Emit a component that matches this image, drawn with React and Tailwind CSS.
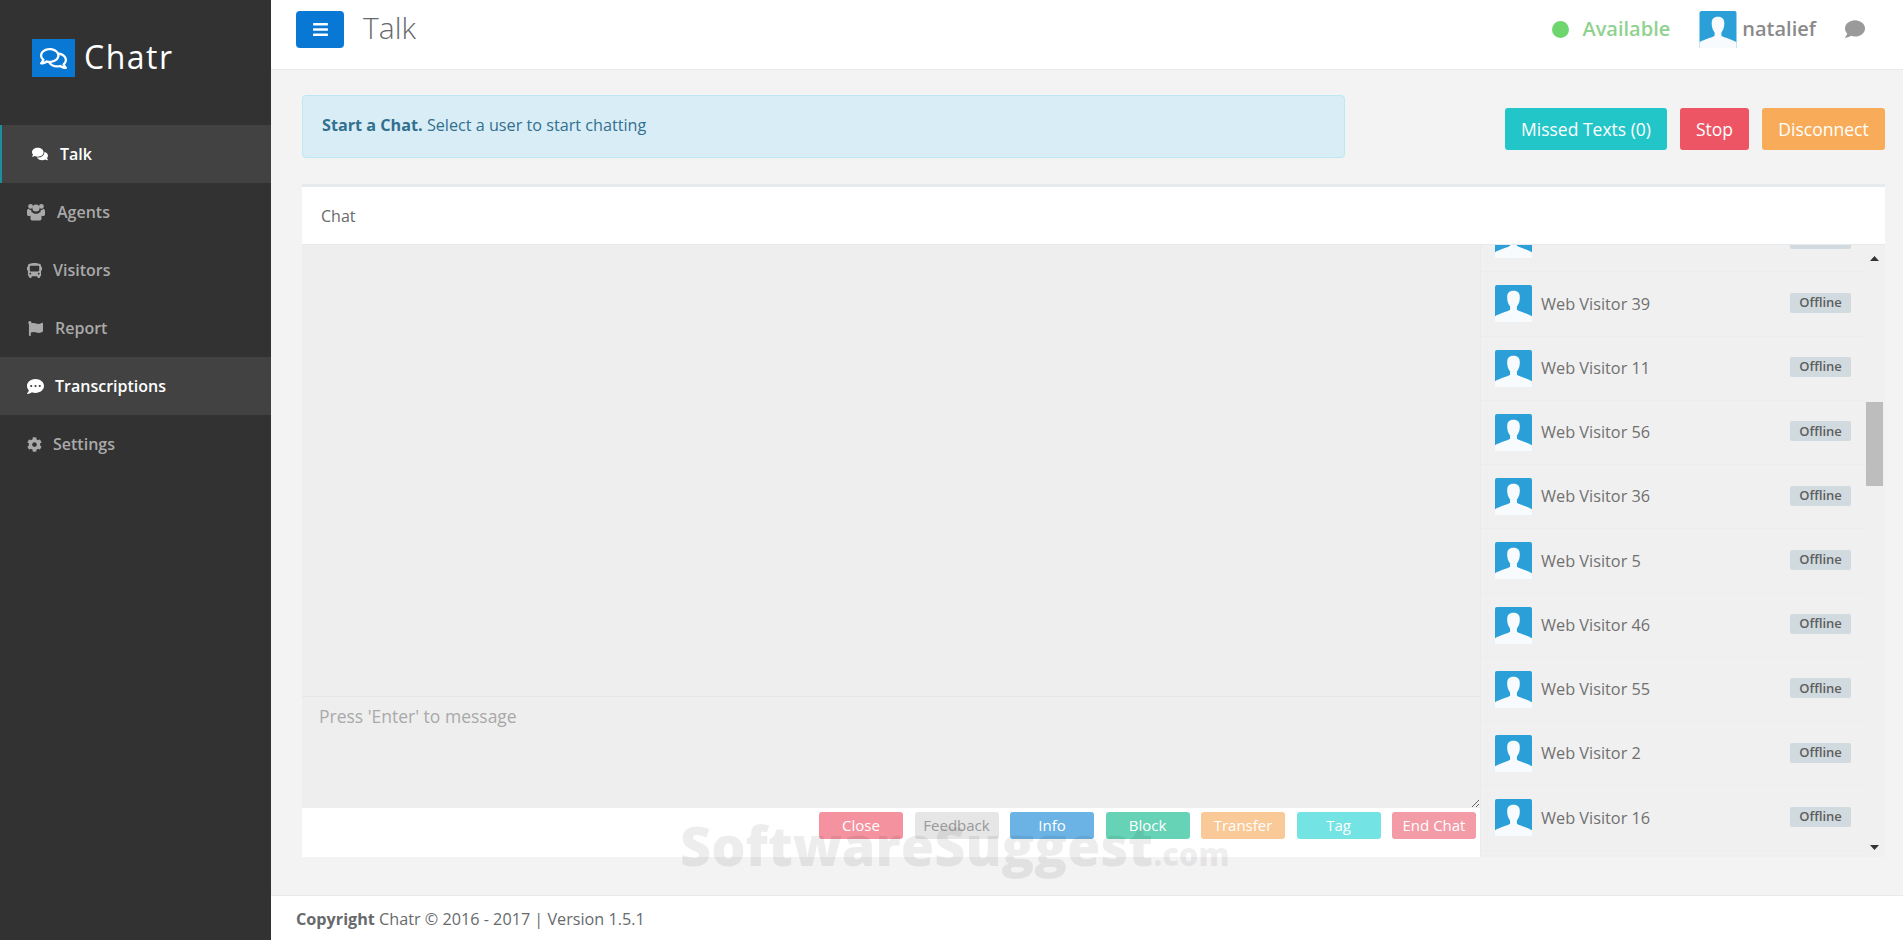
import React from "react";
import { FaBars, FaBus, FaCog, FaComment, FaCommentDots, FaComments, FaFlag, FaRegComments } from "react-icons/fa";

function UsersIcon({ size }) {
  return (
    <svg width={size} height={size} viewBox="0 0 18 18" fill="currentColor" aria-hidden="true">
      <circle cx="3.600" cy="3.400" r="2.400" />
      <circle cx="14.400" cy="3.400" r="2.400" />
      <circle cx="9" cy="5" r="3.600" />
      <path d="M0 8c0-1.200.8-2.200 1.600-2.200.6.8 1.500 1.200 2.500 1.200.2 1.500.7 2.800 1.600 3.600-1.200.5-1.900 1.400-2.100 2.400H1.500C.6 13 0 12.400 0 11.600zM18 8c0-1.200-.8-2.200-1.600-2.200-.6.8-1.500 1.200-2.500 1.200-.2 1.500-.7 2.800-1.600 3.600 1.200.5 1.900 1.400 2.100 2.400h2.100c.9 0 1.500-.6 1.500-1.400z" />
      <path d="M5.300 9.200c.9 1 2.200 1.500 3.700 1.500s2.800-.5 3.700-1.500c1.100.3 1.800 1.500 1.800 3.600v3c0 1-.8 1.700-1.600 1.700H5.100c-.8 0-1.600-.7-1.600-1.700v-3c0-2.100.7-3.300 1.800-3.600z" />
    </svg>
  );
}

const navItems = [
  { label: "Talk", icon: FaComments, iconSize: 16, padLeft: "pl-[30px]", gap: "gap-[12px]", active: true, accent: true },
  { label: "Agents", icon: UsersIcon, iconSize: 18, padLeft: "pl-[27px]", gap: "gap-[12px]" },
  { label: "Visitors", icon: FaBus, iconSize: 15, padLeft: "pl-[27px]", gap: "gap-[11px]" },
  { label: "Report", icon: FaFlag, iconSize: 15, padLeft: "pl-[28px]", gap: "gap-[12px]" },
  { label: "Transcriptions", icon: FaCommentDots, iconSize: 17, padLeft: "pl-[27px]", gap: "gap-[11px]", active: true },
  { label: "Settings", icon: FaCog, iconSize: 15, padLeft: "pl-[27px]", gap: "gap-[11px]" },
];

const visitors = ["Web Visitor 39", "Web Visitor 11", "Web Visitor 56", "Web Visitor 36", "Web Visitor 5", "Web Visitor 46", "Web Visitor 55", "Web Visitor 2", "Web Visitor 16"];

const chatActions = [
  { label: "Close", className: "bg-[#f4939f] text-white" },
  { label: "Feedback", className: "bg-[#e6e6e6] text-[#999999]" },
  { label: "Info", className: "bg-[#6bb2e5] text-white" },
  { label: "Block", className: "bg-[#66d3b6] text-white" },
  { label: "Transfer", className: "bg-[#f9c997] text-white" },
  { label: "Tag", className: "bg-[#74e3e3] text-white" },
  { label: "End Chat", className: "bg-[#f39ba6] text-white" },
];

function Avatar({ className }) {
  return (
    <svg className={className} viewBox="0 0 38 38" aria-hidden="true">
      <path d="M2 0h34a2 2 0 0 1 2 2v36H0V2a2 2 0 0 1 2-2z" fill="#2a9fd8" />
      <path
        d="M19 6c-4.500 0-6.500 2.500-6.500 6.500 0 4 1 7 3 9.500v3.500c-3 2-10 3.500-15.500 6.500v6h38v-6c-5.500-3-12.500-4.500-15.500-6.500V22c2-2.500 3-5.500 3-9.500C25.500 8.500 23.500 6 19 6z"
        fill="#f7fbfd"
      />
    </svg>
  );
}

function Sidebar() {
  return (
    <aside className="w-[271px] shrink-0 bg-[#323232] flex flex-col">
      <div className="h-[125px] pl-[32px] pt-[39px]">
        <div className="flex items-center">
          <div className="w-[43px] h-[38px] bg-[#0878d4] flex items-center justify-center text-white">
            <FaRegComments size={27} />
          </div>
          <span className="ml-[9px] mt-[-2px] text-[32px] leading-[38px] tracking-[1.500px] text-white font-['Open_Sans',sans-serif]">Chatr</span>
        </div>
      </div>
      <nav>
        {navItems.map((item) => {
          const Icon = item.icon;
          return (
            <div
              key={item.label}
              className={`h-[58px] flex items-center ${item.padLeft} ${item.gap} ${item.active ? "bg-[#424242] text-white font-semibold" : "text-[#a9a9a9] font-semibold"} ${item.accent ? "border-l-2 border-[#1b8f9c]" : ""}`}
            >
              <Icon size={item.iconSize} />
              <span className="text-[16px]">{item.label}</span>
            </div>
          );
        })}
      </nav>
    </aside>
  );
}

function TopBar() {
  return (
    <header className="h-[70px] shrink-0 bg-white border-b border-[#e7eaec] flex items-start pl-[25px] pr-[38px]">
      <button className="mt-[11px] w-[48px] h-[37px] rounded-[4px] bg-[#0878d4] text-white flex items-center justify-center">
        <FaBars size={17} />
      </button>
      <h1 className="ml-[19px] mt-[7px] text-[30px] leading-[42px] font-light text-[#676a6c]">Talk</h1>
      <div className="ml-auto flex items-center h-[58px]">
        <span className="w-[17px] h-[17px] rounded-full bg-[#6fd66f]"></span>
        <span className="ml-[13px] text-[20px] font-semibold text-[#8fd28f]">Available</span>
        <Avatar className="ml-[29px] w-[38px] h-[37px]" />
        <span className="ml-[5px] text-[20px] font-semibold text-[#8a8a8a]">natalief</span>
        <FaComment size={20} className="ml-[29px] text-[#9a9a9a]" />
      </div>
    </header>
  );
}

function VisitorRow({ name }) {
  return (
    <div className="h-[64.250px] shrink-0 flex items-center pl-[14px] pr-[15px] border-b border-[#ededed]">
      <Avatar className="w-[37px] h-[37px] shrink-0" />
      <span className="ml-[9px] text-[16.300px] text-[#707070]">{name}</span>
      <span className="ml-auto mb-[2px] w-[61px] h-[20px] rounded-[2px] bg-[#d1dade] text-[#5e5e5e] text-[13px] font-semibold flex items-center justify-center">Offline</span>
    </div>
  );
}

function VisitorList() {
  return (
    <div className="flex-1 flex bg-[#f0f0f0] border-l border-[#ebebeb] overflow-hidden">
      <div className="w-[385px] overflow-hidden">
        {/* row scrolled up under the panel header, only its avatar and badge edge show */}
        <div className="mt-[-37px] h-[64.250px] flex items-center pl-[14px] pr-[15px] border-b border-[#ededed]">
          <Avatar className="w-[37px] h-[37px] shrink-0" />
          <span className="ml-auto mb-[2px] w-[61px] h-[20px] rounded-[2px] bg-[#d1dade]"></span>
        </div>
        {visitors.map((name) => (
          <VisitorRow key={name} name={name} />
        ))}
      </div>
      <div className="w-[17px] flex flex-col items-center">
        <div className="h-[11px]" />
        <svg className="w-[9px] h-[5px]" viewBox="0 0 9 5"><path d="M4.500 0L9 5H0z" fill="#333" /></svg>
        <div className="h-[141px]" />
        <div className="w-full h-[84px] bg-[#bdbdbd]" />
        <div className="h-[359px]" />
        <svg className="w-[9px] h-[5px]" viewBox="0 0 9 5"><path d="M4.500 5L0 0h9z" fill="#333" /></svg>
      </div>
    </div>
  );
}

function ChatPanel() {
  return (
    <section className="relative mt-[26px] w-[1583px]">
      <div className="h-[61px] bg-white border-t-[3px] border-b border-t-[#e7eaec] border-b-[#e7eaec] flex items-center pl-[19px] text-[16px] text-[#676a6c]">
        Chat
      </div>
      <div className="h-[612px] flex">
        <div className="w-[1178px] shrink-0 flex flex-col bg-white">
          <div className="h-[451px] bg-[#eeeeee]"></div>
          <textarea
            readOnly
            placeholder="Press 'Enter' to message"
            className="h-[112px] w-full block bg-[#eeeeee] border-t border-[#e5e6e7] pl-[17px] pt-[6px] text-[17.500px] text-[#676a6c] placeholder:text-[#a9a9a9] outline-none"
          />
          <div className="h-[49px] flex justify-end gap-[11.500px] pt-[4px] pr-[4px]">
            {chatActions.map((action) => (
              <button key={action.label} className={`w-[84px] h-[27px] rounded-[3px] text-[15px] ${action.className}`}>
                {action.label}
              </button>
            ))}
          </div>
        </div>
        <VisitorList />
      </div>
      {/* watermark */}
      <div className="absolute left-[378px] top-[631px] pointer-events-none whitespace-nowrap text-[rgba(0,0,0,0.07)] font-extrabold leading-[60px] text-[54px]">
        SoftwareSuggest<span className="text-[31px]">.com</span>
      </div>
    </section>
  );
}

export default function App() {
  return (
    <div className="h-[940px] flex overflow-hidden font-['Open_Sans',sans-serif]">
      <Sidebar />
      <div className="flex-1 flex flex-col bg-[#f3f3f4] min-w-0">
        <TopBar />
        <main className="flex-1 pl-[31px] pt-[25px]">
          <div className="flex w-[1583px]">
            <div className="w-[1043px] h-[63px] rounded-[4px] bg-[#d9edf7] border border-[#bce8f1] text-[#31708f] text-[16.200px] pl-[19px] pb-[2px] flex items-center">
              <strong className="font-bold">Start a Chat.</strong>&nbsp;Select a user to start chatting
            </div>
            <div className="ml-auto mt-[13px] flex gap-[13px] text-[17.500px]">
              <button className="w-[162px] h-[42px] rounded-[3px] bg-[#23c6c8] text-white">Missed Texts (0)</button>
              <button className="w-[69px] h-[42px] rounded-[3px] bg-[#ed5565] text-white">Stop</button>
              <button className="w-[123px] h-[42px] rounded-[3px] bg-[#f8ac59] text-white">Disconnect</button>
            </div>
          </div>
          <ChatPanel />
        </main>
        <footer className="h-[45px] shrink-0 bg-white border-t border-[#e7eaec] pl-[25px] pt-[3px] flex items-center text-[16.200px] text-[#676a6c]">
          <strong className="font-bold">Copyright</strong>&nbsp;Chatr © 2016 - 2017 | Version 1.5.1
        </footer>
      </div>
    </div>
  );
}
